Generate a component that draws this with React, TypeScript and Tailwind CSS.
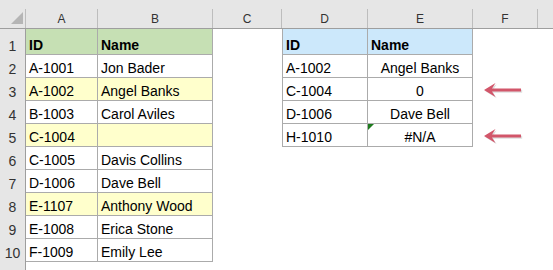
import type { ReactNode } from "react";

const cols = [
  { key: "A", w: "w-[72px]" },
  { key: "B", w: "w-[115px]" },
  { key: "C", w: "w-[69px]" },
  { key: "D", w: "w-[86px]" },
  { key: "E", w: "w-[105px]" },
  { key: "F", w: "w-[65px]" },
  { key: "", w: "w-[80px]" },
];

type Row = {
  a?: string;
  b?: string;
  d?: string;
  e?: string;
  fill?: string;
  tag?: boolean;
};

const rows: Row[] = [
  { a: "ID", b: "Name", d: "ID", e: "Name" },
  { a: "A-1001", b: "Jon Bader", d: "A-1002", e: "Angel Banks" },
  { a: "A-1002", b: "Angel Banks", d: "C-1004", e: "0", fill: "bg-[#ffffcc]" },
  { a: "B-1003", b: "Carol Aviles", d: "D-1006", e: "Dave Bell" },
  { a: "C-1004", b: "", d: "H-1010", e: "#N/A", fill: "bg-[#ffffcc]", tag: true },
  { a: "C-1005", b: "Davis Collins" },
  { a: "D-1006", b: "Dave Bell" },
  { a: "E-1107", b: "Anthony Wood", fill: "bg-[#ffffcc]" },
  { a: "E-1008", b: "Erica Stone" },
  { a: "F-1009", b: "Emily Lee" },
];

const Cell = ({
  w,
  className = "",
  children,
}: {
  w: string;
  className?: string;
  children?: ReactNode;
}) => (
  <div className={`${w} shrink-0 flex items-end px-[3px] leading-[17px] relative ${className}`}>
    {children}
  </div>
);

// red pointer arrow with a soft shadow
const Arrow = () => {
  const d = "M1 11 L12.5 4 L9 9.5 L38 9.5 L38 12.5 L9 12.5 L12.5 18 Z";
  return (
    <svg width="42" height="22" viewBox="0 0 42 22" className="block">
      <path d={d} transform="translate(1.2,1.2)" fill="#000" opacity="0.13" />
      <path d={d} fill="#d2566a" />
    </svg>
  );
};

export default function App() {
  return (
    <div className="w-[553px] h-[270px] overflow-hidden bg-white font-['Liberation_Sans',Arial,sans-serif] text-[14px] text-black">
      {/* column headers */}
      <div className="h-[29px] bg-[#e6e6e6] border-b border-[#9e9e9e] flex flex-col">
        <div className="h-[9px]" />
        <div className="flex flex-1">
          <div className="w-[26px] shrink-0 border-r border-[#bdbdbd] relative">
            <div className="absolute left-[11px] top-[3px] w-0 h-0 border-l-[12px] border-l-transparent border-b-[12px] border-b-[#b5b5b5]" />
          </div>
          {cols.map((c, i) => (
            <div
              key={i}
              className={`${c.w} shrink-0 border-r border-[#bdbdbd] flex items-center justify-center text-[12px] text-[#333]`}
            >
              {c.key}
            </div>
          ))}
        </div>
      </div>

      {rows.map((r, i) => {
        const head = i === 0;
        const h = head ? "h-[26px]" : "h-[23px]";
        const left = head ? "bg-[#c6e0b4] font-bold" : r.fill ?? "";
        const right = head ? "bg-[#cce8fb] font-bold" : "";
        const hasRight = r.d !== undefined;
        return (
          <div key={i} className={`flex ${h}`}>
            <div className="w-[26px] shrink-0 bg-[#e6e6e6] border-r border-[#9e9e9e] flex items-end justify-center leading-[17px] text-[#333]">
              {i + 1}
            </div>
            <Cell w="w-[72px]" className={`border-r border-b border-[#ababab] ${left}`}>
              {r.a}
            </Cell>
            <Cell w="w-[115px]" className={`border-r border-b border-[#ababab] ${left}`}>
              {r.b}
            </Cell>
            <Cell w="w-[69px]" />
            {hasRight ? (
              <>
                <Cell w="w-[86px]" className={`border-l border-r border-b border-[#ababab] ${right}`}>
                  {r.d}
                </Cell>
                <Cell
                  w="w-[105px]"
                  className={`border-r border-b border-[#ababab] ${right} ${head ? "" : "justify-center"}`}
                >
                  {r.tag && (
                    <span className="absolute left-0 top-0 w-0 h-0 border-t-[6px] border-t-[#1e7b1e] border-r-[6px] border-r-transparent" />
                  )}
                  {r.e}
                </Cell>
                <div className="w-[65px] shrink-0 flex items-center pl-[10px]">
                  {(i === 2 || i === 4) && <Arrow />}
                </div>
              </>
            ) : null}
          </div>
        );
      })}

      <div className="flex h-[23px]">
        <div className="w-[26px] shrink-0 bg-[#e6e6e6] border-r border-[#9e9e9e] flex items-end justify-center leading-[17px] text-[#333]">
          11
        </div>
      </div>
    </div>
  );
}
